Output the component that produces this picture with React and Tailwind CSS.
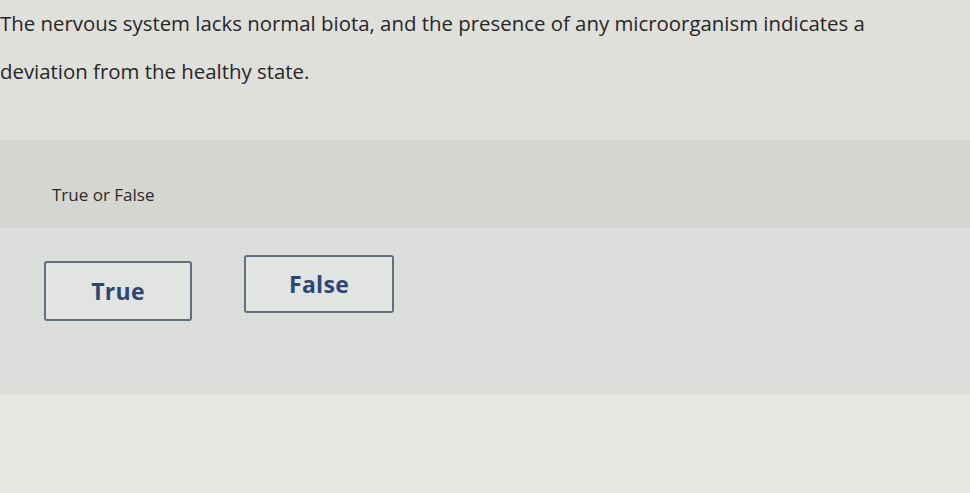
export default function App() {
  const font = { fontFamily: '"Open Sans", "Noto Sans", "Liberation Sans", sans-serif' };
  return (
    <div className="w-[970px] h-[493px] overflow-hidden flex flex-col bg-[#e4e6e2]" style={font}>
      {/* Question prompt */}
      <div className="h-[140px] bg-[#dfe0db]">
        <p className="mt-[-1px] w-[890px] text-[20.4px] leading-[48px] font-medium text-[#262626]">
          The nervous system lacks normal biota, and the presence of any microorganism indicates a deviation from the healthy state.
        </p>
      </div>

      {/* Question type header */}
      <div className="h-[88px] bg-[#d5d6d1] flex items-center pl-[52px]">
        <span className="text-[17px] text-[#2a2a2a] mt-[22px]">True or False</span>
      </div>

      {/* Answer choices */}
      <div className="h-[166px] bg-[#dcdedb] flex items-start gap-[52px] pl-[44px] pt-[33px]">
        <button className="w-[148px] h-[60px] border-2 border-[#646e7e] rounded-[3px] bg-[#e2e4e1] flex items-center justify-center text-[23px] font-bold text-[#2c4776] tracking-[0.3px]">
          True
        </button>
        <button className="w-[150px] h-[58px] mt-[-6px] border-2 border-[#646e7e] rounded-[3px] bg-[#e2e4e1] flex items-center justify-center text-[23px] font-bold text-[#2c4776] tracking-[0.3px]">
          False
        </button>
      </div>

      <div className="flex-1 bg-[#e5e7e3]" />
    </div>
  );
}
